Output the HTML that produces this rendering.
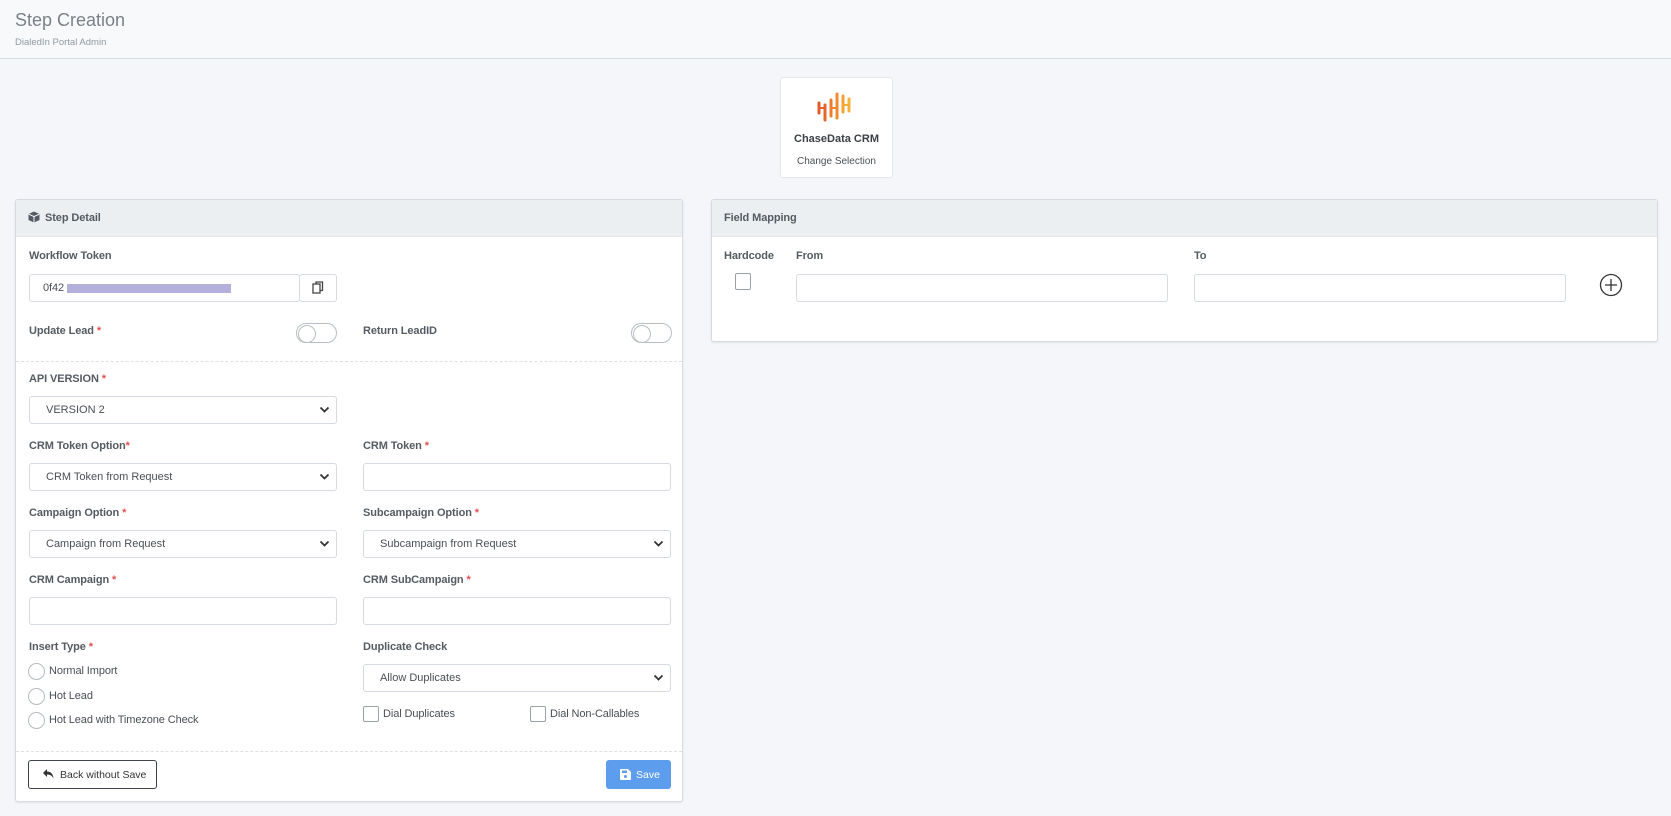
<!DOCTYPE html>
<html><head><meta charset="utf-8"><style>
*{box-sizing:border-box;margin:0;padding:0}
body{width:1671px;height:816px;background:#f5f6fa;font-family:"Liberation Sans",sans-serif;color:#495057;position:relative;overflow:hidden}
.a{position:absolute}
.hdr{left:0;top:0;width:1671px;height:59px;background:#f8f9fb;border-bottom:1px solid #d5dde2}
.t{font-size:11px;color:#4a4f55;letter-spacing:-0.1px}
.lbl{font-size:11px;font-weight:bold;color:#555b62;letter-spacing:-0.1px}
.req{color:#e0524f}
.in{background:#fff;border:1px solid #d5dbe0;border-radius:3px}
.sel{font-size:11px;color:#4a4f55;padding-left:16px;display:flex;align-items:center}
.chev{position:absolute;right:6px;top:50%;margin-top:-5px}
.card{background:#fff;border:1px solid #d5dbe0;border-radius:3px;box-shadow:0 1px 2px rgba(0,0,0,.08)}
.ch{background:#eceff1;height:37px;border-bottom:1px solid #e3e7ea}
.tog{width:41px;height:20px;border:1px solid #b8bec4;border-radius:10px;background:#fff}
.tog:after{content:"";position:absolute;left:1px;top:1px;width:16px;height:16px;border:1px solid #b8bec4;border-radius:50%}
.rad{width:17px;height:17px;border:1px solid #b5bbc1;border-radius:50%;background:#fff}
.cb{width:16px;height:16px;border:1px solid #9aa1a7;border-radius:2px;background:#fff}
</style></head><body>
<div class="a hdr"></div>
<div class="a" style="left:15px;top:10px;font-size:18px;color:#7b8187">Step Creation</div>
<div class="a" style="left:15px;top:37px;font-size:9.5px;color:#8e9aa5">DialedIn Portal Admin</div>

<div class="a card" style="left:780px;top:77px;width:113px;height:101px;box-shadow:none;border-color:#e3e7ea"></div>
<svg class="a" style="left:815px;top:92px" width="44" height="30" viewBox="0 0 44 30">
<g stroke-linecap="round" stroke-width="3">
<line x1="4" y1="11" x2="4" y2="21" stroke="#e05a2a"/>
<line x1="10" y1="13" x2="10" y2="28" stroke="#e8652a"/>
<line x1="16" y1="8" x2="16" y2="24" stroke="#ee7a2c"/>
<line x1="22" y1="2" x2="22" y2="26" stroke="#f08a30"/>
<line x1="28" y1="4" x2="28" y2="20" stroke="#f3a035"/>
<line x1="34" y1="7" x2="34" y2="19" stroke="#f5b23a"/>
<line x1="4" y1="16" x2="10" y2="16" stroke="#e5602a" stroke-width="2"/>
<line x1="16" y1="16" x2="22" y2="16" stroke="#ef842e" stroke-width="2"/>
<line x1="28" y1="13" x2="34" y2="13" stroke="#f4aa38" stroke-width="2"/>
</g></svg>
<div class="a" style="left:780px;top:133px;width:113px;text-align:center;font-size:11px;font-weight:bold;color:#3b4046">ChaseData CRM</div>
<div class="a" style="left:780px;top:156px;width:113px;text-align:center;font-size:10px;color:#4a4f55">Change Selection</div>

<div class="a card" style="left:15px;top:199px;width:668px;height:603px"></div>
<div class="a ch" style="left:16px;top:200px;width:666px"></div>
<svg class="a" style="left:28px;top:211px" width="12" height="12" viewBox="0 0 12 12"><path d="M6 0.5L11.5 3v6L6 11.5 0.5 9V3z" fill="#555b62"/><path d="M0.8 3.2L6 5.6 11.2 3.2M6 5.6v5.6" stroke="#fff" stroke-width="1" fill="none"/></svg>
<div class="a lbl" style="left:45px;top:212px">Step Detail</div>

<div class="a lbl" style="left:29px;top:250px">Workflow Token</div>
<div class="a in" style="left:29px;top:274px;width:271px;height:28px"></div>
<div class="a t" style="left:43px;top:282px">0f42</div>
<div class="a" style="left:67px;top:284px;width:164px;height:9px;background:#b3b0dc"></div>
<div class="a in" style="left:299px;top:274px;width:38px;height:28px"></div>
<svg class="a" style="left:312px;top:281px" width="12" height="13" viewBox="0 0 12 13"><rect x="1" y="3" width="7" height="9" fill="none" stroke="#444" stroke-width="1.3"/><path d="M4 3V1h6.5v8.5H8" fill="none" stroke="#444" stroke-width="1.3"/></svg>

<div class="a lbl" style="left:29px;top:325px">Update Lead <span class="req">*</span></div>
<div class="a tog" style="left:296px;top:323px"></div>
<div class="a lbl" style="left:363px;top:325px">Return LeadID</div>
<div class="a tog" style="left:631px;top:323px"></div>

<div class="a" style="left:16px;top:361px;width:666px;border-top:1px dashed #dde1e4"></div>

<div class="a lbl" style="left:29px;top:373px">API VERSION <span class="req">*</span></div>
<div class="a in sel" style="left:29px;top:396px;width:308px;height:28px">VERSION 2<svg class="chev" width="11" height="9" viewBox="0 0 11 9"><path d="M1.5 2.5l4 4 4-4" stroke="#333" stroke-width="1.8" fill="none"/></svg></div>

<div class="a lbl" style="left:29px;top:440px">CRM Token Option<span class="req">*</span></div>
<div class="a in sel" style="left:29px;top:463px;width:308px;height:28px">CRM Token from Request<svg class="chev" width="11" height="9" viewBox="0 0 11 9"><path d="M1.5 2.5l4 4 4-4" stroke="#333" stroke-width="1.8" fill="none"/></svg></div>
<div class="a lbl" style="left:363px;top:440px">CRM Token <span class="req">*</span></div>
<div class="a in" style="left:363px;top:463px;width:308px;height:28px"></div>

<div class="a lbl" style="left:29px;top:507px">Campaign Option <span class="req">*</span></div>
<div class="a in sel" style="left:29px;top:530px;width:308px;height:28px">Campaign from Request<svg class="chev" width="11" height="9" viewBox="0 0 11 9"><path d="M1.5 2.5l4 4 4-4" stroke="#333" stroke-width="1.8" fill="none"/></svg></div>
<div class="a lbl" style="left:363px;top:507px">Subcampaign Option <span class="req">*</span></div>
<div class="a in sel" style="left:363px;top:530px;width:308px;height:28px">Subcampaign from Request<svg class="chev" width="11" height="9" viewBox="0 0 11 9"><path d="M1.5 2.5l4 4 4-4" stroke="#333" stroke-width="1.8" fill="none"/></svg></div>

<div class="a lbl" style="left:29px;top:574px">CRM Campaign <span class="req">*</span></div>
<div class="a in" style="left:29px;top:597px;width:308px;height:28px"></div>
<div class="a lbl" style="left:363px;top:574px">CRM SubCampaign <span class="req">*</span></div>
<div class="a in" style="left:363px;top:597px;width:308px;height:28px"></div>

<div class="a lbl" style="left:29px;top:641px">Insert Type <span class="req">*</span></div>
<div class="a rad" style="left:28px;top:663px"></div><div class="a t" style="left:49px;top:665px">Normal Import</div>
<div class="a rad" style="left:28px;top:688px"></div><div class="a t" style="left:49px;top:690px">Hot Lead</div>
<div class="a rad" style="left:28px;top:712px"></div><div class="a t" style="left:49px;top:714px">Hot Lead with Timezone Check</div>

<div class="a lbl" style="left:363px;top:641px">Duplicate Check</div>
<div class="a in sel" style="left:363px;top:664px;width:308px;height:28px">Allow Duplicates<svg class="chev" width="11" height="9" viewBox="0 0 11 9"><path d="M1.5 2.5l4 4 4-4" stroke="#333" stroke-width="1.8" fill="none"/></svg></div>
<div class="a cb" style="left:363px;top:706px"></div><div class="a t" style="left:383px;top:708px">Dial Duplicates</div>
<div class="a cb" style="left:530px;top:706px"></div><div class="a t" style="left:550px;top:708px">Dial Non-Callables</div>

<div class="a" style="left:16px;top:751px;width:666px;border-top:1px dashed #dde1e4"></div>

<div class="a" style="left:28px;top:760px;width:129px;height:29px;border:1px solid #3d4248;border-radius:3px;background:#fff"></div>
<svg class="a" style="left:42px;top:768px" width="13" height="12" viewBox="0 0 13 12"><path d="M5 1L1 5l4 4V6.5c3 0 5 1 6.5 4C11 6 9 3.5 5 3.5z" fill="#333"/></svg>
<div class="a" style="left:60px;top:769px;font-size:10.5px;color:#333">Back without Save</div>
<div class="a" style="left:606px;top:760px;width:65px;height:29px;background:#5d9ded;border-radius:3px"></div>
<svg class="a" style="left:620px;top:769px" width="11" height="11" viewBox="0 0 11 11"><path d="M0 1a1 1 0 011-1h7l3 3v7a1 1 0 01-1 1H1a1 1 0 01-1-1z" fill="#fff"/><rect x="2" y="1.5" width="5" height="2.5" fill="#5d9ded"/><circle cx="5.5" cy="7.5" r="1.5" fill="#5d9ded"/></svg>
<div class="a" style="left:636px;top:769px;font-size:10.5px;color:#fff">Save</div>

<div class="a card" style="left:711px;top:199px;width:947px;height:143px"></div>
<div class="a ch" style="left:712px;top:200px;width:945px"></div>
<div class="a lbl" style="left:724px;top:212px">Field Mapping</div>
<div class="a lbl" style="left:724px;top:250px">Hardcode</div>
<div class="a lbl" style="left:796px;top:250px">From</div>
<div class="a lbl" style="left:1194px;top:250px">To</div>
<div class="a cb" style="left:735px;top:273px;height:17px"></div>
<div class="a in" style="left:796px;top:274px;width:372px;height:28px"></div>
<div class="a in" style="left:1194px;top:274px;width:372px;height:28px"></div>
<svg class="a" style="left:1599px;top:273px" width="24" height="24" viewBox="0 0 24 24"><circle cx="12" cy="12" r="10.5" fill="none" stroke="#333" stroke-width="1.3"/><path d="M12 6v12M6 12h12" stroke="#333" stroke-width="1.3"/></svg>
</body></html>
